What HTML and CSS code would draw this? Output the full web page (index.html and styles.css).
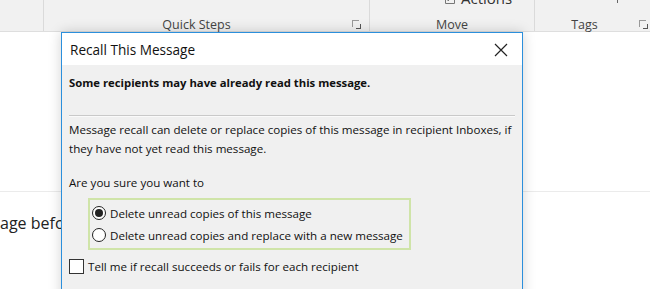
FILE: index.html
```html
<!DOCTYPE html>
<html lang="en">
<head>
    <meta charset="UTF-8">
    <title>Recall This Message</title>
    <link rel="stylesheet" href="styles.css">
</head>
<body>
    <div class="ribbon">
        <div class="group group-first"></div>
        <div class="group group-steps">
            <span class="label">Quick Steps</span>
            <span class="launcher"></span>
        </div>
        <div class="group group-move">
            <div class="actions">
                <svg width="10" height="8" viewBox="0 0 10 8"><path d="M0.5 0 V6.5 H9.5 V0 M2.5 3.5 H4" fill="none" stroke="#777" stroke-width="1"/></svg>
                <span>Actions</span>
            </div>
            <span class="label">Move</span>
        </div>
        <div class="group group-tags">
            <span class="tick"></span>
            <span class="label">Tags</span>
            <span class="launcher"></span>
        </div>
    </div>

    <div class="page">
        <div class="page-top"></div>
        <div class="page-row">age before you send it</div>
    </div>

    <!-- dialog -->
    <div class="dialog">
        <div class="dialog-title">
            <span>Recall This Message</span>
            <svg class="close" width="14" height="14" viewBox="0 0 14 14"><path d="M1 1 L13 13 M13 1 L1 13" stroke="#222" stroke-width="1.2"/></svg>
        </div>
        <div class="dialog-body">
            <p class="warn">Some recipients may have already read this message.</p>
            <hr class="sep">
            <p class="desc">Message recall can delete or replace copies of this message in recipient Inboxes, if they have not yet read this message.</p>
            <p class="ask">Are you sure you want to</p>
            <div class="choices">
                <label class="choice"><span class="radio checked"></span><span>Delete unread copies of this message</span></label>
                <label class="choice"><span class="radio"></span><span>Delete unread copies and replace with a new message</span></label>
            </div>
            <label class="check"><span class="box"></span><span>Tell me if recall succeeds or fails for each recipient</span></label>
        </div>
    </div>
</body>
</html>
```

FILE: styles.css
```css
body{
    margin: 0;
    width: 650px;
    height: 289px;
    overflow: hidden;
    background: white;
    font-family: "Open Sans", "Noto Sans", sans-serif;
    position: relative;
}

/* RIBBON */
.ribbon{
    display: flex;
    height: 31px;
    background-color: #f1f1f1;
    border-bottom: 1px solid #dedede;
}
.group{
    position: relative;
    border-right: 1px solid #dadada;
    display: flex;
    justify-content: center;
    align-items: flex-end;
    color: #444;
    font-size: 12.5px;
}
.group-first{ width: 43px; }
.group-steps{ width: 326px; padding-right: 20px; box-sizing: border-box; }
.group-move{ width: 164px; }
.group-tags{ flex: 1; border-right: none; padding-right: 16px; }
.label{
    line-height: 12px;
    margin-bottom: 0;
}
.launcher{
    position: absolute;
    right: 8px;
    bottom: 4px;
    width: 6px;
    height: 6px;
    border-top: 1px solid #999;
    border-left: 1px solid #999;
}
.launcher::after{
    content: "";
    position: absolute;
    right: -2px;
    bottom: -2px;
    width: 4px;
    height: 4px;
    border-right: 1px solid #555;
    border-bottom: 1px solid #555;
}
.group-steps .launcher{ right: 10px; }
.group-tags .launcher{ right: 4px; }
.actions{
    position: absolute;
    left: 75px;
    top: -12px;
    display: flex;
    align-items: flex-end;
    gap: 6px;
    font-size: 15px;
    color: #333;
}
.actions svg{ margin-bottom: 3px; }
.tick{
    position: absolute;
    left: 82px;
    top: 0;
    width: 1px;
    height: 3px;
    background: #666;
}

/* PAGE BEHIND */
.page-top{
    height: 159px;
    border-bottom: 1px solid #ebebeb;
}
.page-row{
    padding-top: 20px;
    font-size: 16px;
    color: #222;
    white-space: nowrap;
}

/* DIALOG */
.dialog{
    position: absolute;
    left: 61px;
    top: 32px;
    width: 460px;
    height: 270px;
    border: 1px solid #2b8fdc;
    background: #f0f0f0;
    box-shadow: 0 0 12px rgba(0,0,0,0.18);
    font-size: 11.6px;
    color: #111;
}
.dialog-title{
    background: white;
    height: 32px;
    display: flex;
    align-items: center;
    justify-content: space-between;
    padding: 0 14px 0 8px;
    font-size: 13.6px;
    color: #111;
}
.dialog-title .close{ margin-top: 1px; }
.dialog-body{
    padding: 0 7px 0 7px;
}
.dialog-body p{ margin: 0; }
.warn{
    font-weight: bold;
    font-size: 11.3px;
    padding-top: 9px;
    line-height: 18px;
}
.sep{
    margin: 23px 0 4px 0;
    border: none;
    border-top: 1px solid #c9c9c9;
    border-bottom: 1px solid #fafafa;
}
.desc{
    line-height: 19px;
    margin-top: -1px !important;
}
.ask{
    margin-top: 16px !important;
    line-height: 18px;
}
.choices{
    margin: 6px 0 0 19px;
    width: 317px;
    border: 2px solid #cfe4a8;
    padding: 2px 0 2px 2px;
    display: flex;
    flex-direction: column;
}
.choice{
    display: flex;
    align-items: center;
    gap: 4px;
    height: 22px;
    white-space: nowrap;
}
.radio{
    width: 12px;
    height: 12px;
    border: 1px solid #222;
    border-radius: 50%;
    background: white;
    display: flex;
    align-items: center;
    justify-content: center;
}
.radio.checked::after{
    content: "";
    width: 8px;
    height: 8px;
    border-radius: 50%;
    background: #222;
}
.check{
    display: flex;
    align-items: center;
    gap: 4px;
    margin-top: 7px;
    height: 18px;
}
.box{
    width: 13px;
    height: 13px;
    border: 1px solid #333;
    background: white;
}
```
